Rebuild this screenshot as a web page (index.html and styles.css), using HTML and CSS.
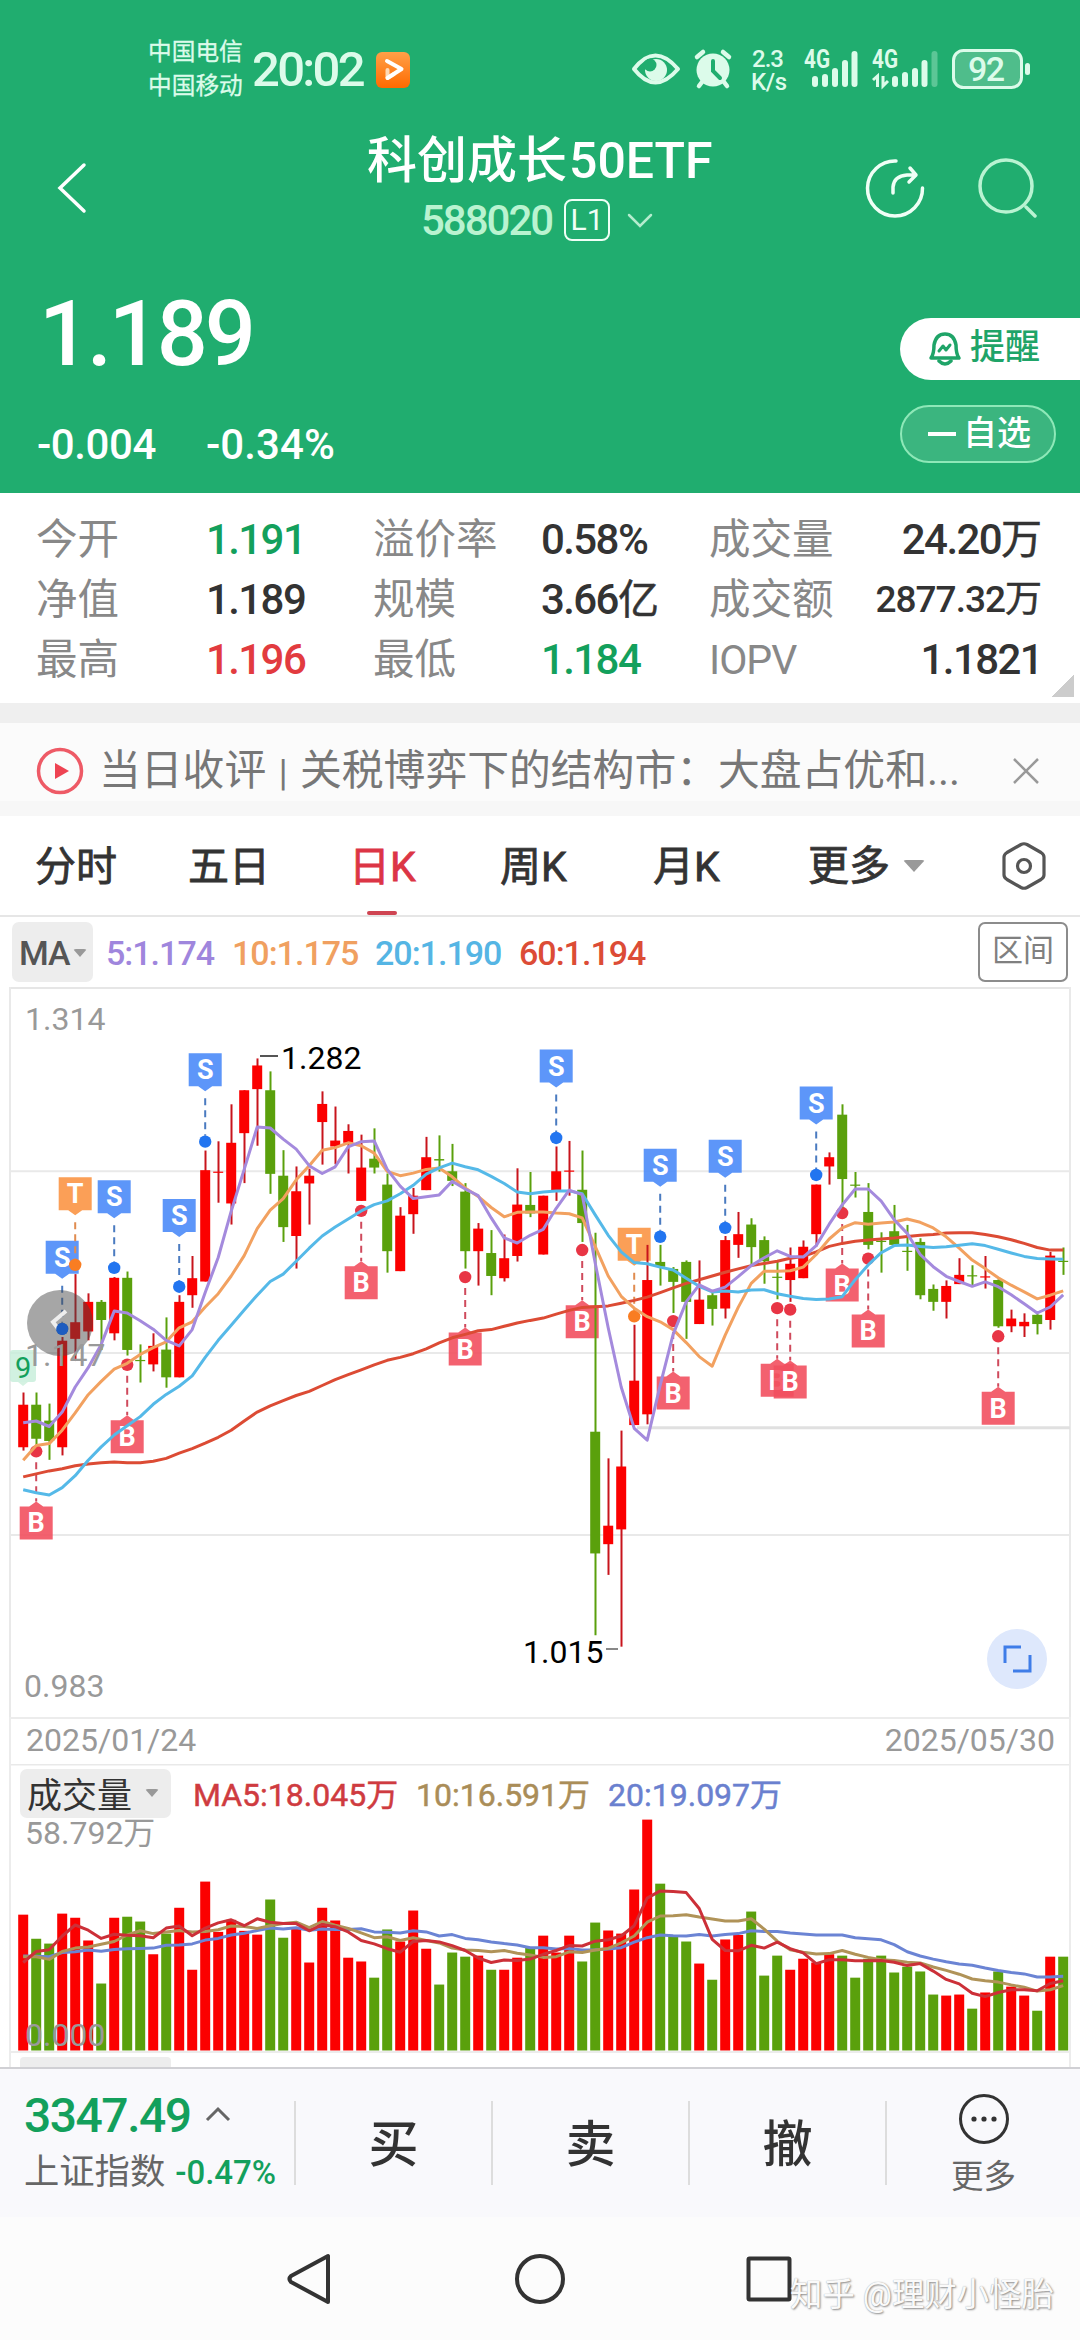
FILE: index.html
```html
<!DOCTYPE html>
<html lang="zh-CN">
<head>
<meta charset="utf-8">
<title>科创成长50ETF</title>
<link rel="stylesheet" href="styles.css">
</head>
<body>
<div class="app">
  <header class="hero">
    <div class="status">
      <div class="carriers"><span>中国电信</span><span>中国移动</span></div>
      <div class="clock">20:02</div>
      <svg class="appicon" width="36" height="36" viewBox="0 0 36 36">
        <defs><linearGradient id="og" x1="0" y1="0" x2="0" y2="1"><stop offset="0" stop-color="#ffa048"/><stop offset="1" stop-color="#ff6a00"/></linearGradient></defs>
        <rect x="1" width="34" height="36" rx="6" fill="url(#og)"/>
        <path d="M12.500 18V26L19 22" fill="none" stroke="#ffd9b5" stroke-width="4" stroke-linecap="round" stroke-linejoin="round"/>
        <path d="M12 9L26.500 17L12.500 26" fill="none" stroke="#fff" stroke-width="4" stroke-linecap="round" stroke-linejoin="round"/>
      </svg>
      <svg class="sysicons" width="412" height="50" viewBox="626 44 412 50" fill="#dcfbea">
        <path d="M634 69Q655 42 678 69Q655 96 634 69Z" fill="none" stroke="#dcfbea" stroke-width="4" stroke-linejoin="round"/>
        <circle cx="656" cy="70" r="11"/><circle cx="650" cy="65" r="6.500" fill="#20ad6f"/>
        <circle cx="713" cy="70" r="16.500"/>
        <path d="M697 57L703 52M729 57L723 52M702 82L699 86M724 82L727 86" stroke="#dcfbea" stroke-width="4.500" stroke-linecap="round"/>
        <path d="M713 61V71L720 78" fill="none" stroke="#20ad6f" stroke-width="4" stroke-linecap="round"/>
        <text x="752" y="67" class="s-net" textLength="32">2.3</text>
        <text x="751" y="90" class="s-net" textLength="36">K/s</text>
        <text x="804" y="68" class="s-g" textLength="26" lengthAdjust="spacingAndGlyphs">4G</text>
        <path d="M815 79V84M825 77V84M835 71V84M845 63V84M854.500 54V84" stroke="#dcfbea" stroke-width="6" stroke-linecap="round"/>
        <text x="872" y="68" class="s-g" textLength="26" lengthAdjust="spacingAndGlyphs">4G</text>
        <path d="M873 80L877.500 76V87M883 76V86L888 81" fill="none" stroke="#dcfbea" stroke-width="3"/>
        <path d="M895 79V84M905 75V84M915 71V84M924.500 63V84" stroke="#dcfbea" stroke-width="6" stroke-linecap="round"/>
        <path d="M934.500 54V84" stroke="#5cc696" stroke-width="6" stroke-linecap="round"/>
        <rect x="953.500" y="50.500" width="68" height="37" rx="10" fill="#4fbd8b" stroke="#dcfbea" stroke-width="3"/>
        <rect x="1025" y="63" width="5" height="12" rx="2.500"/>
        <text x="968" y="81" class="s-bat" textLength="37">92</text>
      </svg>
    </div>

    <div class="titlebar">
      <svg class="back" width="32" height="52" viewBox="0 0 32 52"><path d="M28 3L4 26L28 49" fill="none" stroke="#fff" stroke-width="3.500" stroke-linecap="round"/></svg>
      <div class="titles">
        <h1>科创成长<span>50ETF</span></h1>
        <div class="code"><span class="num">588020</span><span class="level">L1</span>
          <svg width="26" height="16" viewBox="0 0 26 16"><path d="M2 3L13 14L24 3" fill="none" stroke="#b4ecce" stroke-width="2.500" stroke-linecap="round"/></svg></div>
      </div>
      <div class="tools">
        <svg width="60" height="60" viewBox="0 0 60 60" fill="none" stroke="#effff6" stroke-width="3.500" stroke-linecap="round" stroke-linejoin="round"><path d="M31 3A27.500 27.500 0 1 0 57.500 30"/><path d="M28 35V29Q29 18 42 17H50M45 10L51 17L44 24"/></svg>
        <svg width="60" height="60" viewBox="0 0 60 60" fill="none" stroke="#b9f3d2" stroke-width="3.500" stroke-linecap="round"><circle cx="28" cy="28" r="26"/><path d="M48 49L57 58"/></svg>
      </div>
    </div>

    <div class="quote">
      <div class="price">1.189</div>
      <div class="change"><span class="diff">-0.004</span><span class="pct">-0.34%</span></div>
      <div class="remind">
        <svg width="34" height="36" viewBox="0 0 34 36" fill="none" stroke="#1fa468" stroke-width="3.500" stroke-linejoin="round" stroke-linecap="round"><path d="M3 27Q6 23 6 14Q8 3 17 3Q26 3 28 14Q28 23 31 27Z"/><path d="M11 20L15 15L18 19L22 14" stroke-width="3"/><path d="M11 30Q17 36 23 30"/></svg>
        <span>提醒</span></div>
      <div class="fav"><i></i><span>自选</span></div>
    </div>
  </header>

  <section class="stats">
    <span class="k">今开</span><span class="v down">1.191</span><span class="k">溢价率</span><span class="v">0.58%</span><span class="k">成交量</span><span class="v r">24.20<b>万</b></span>
    <span class="k">净值</span><span class="v">1.189</span><span class="k">规模</span><span class="v">3.66<b>亿</b></span><span class="k">成交额</span><span class="v r small">2877.32<b>万</b></span>
    <span class="k">最高</span><span class="v up">1.196</span><span class="k">最低</span><span class="v down">1.184</span><span class="k iopv">IOPV</span><span class="v r">1.1821</span>
    <i class="corner"></i>
  </section>

  <section class="news">
    <svg width="48" height="48" viewBox="0 0 48 48"><circle cx="24" cy="24" r="21.500" fill="none" stroke="#ee5a66" stroke-width="3.500"/><path d="M19 16L33 24L19 32Z" fill="#ee4352"/></svg>
    <span class="headline">当日收评<i>|</i>关税博弈下的结构市：大盘占优和...</span>
    <svg width="28" height="28" viewBox="0 0 28 28"><path d="M2 2L26 26M26 2L2 26" stroke="#999" stroke-width="2.500"/></svg>
  </section>

  <nav class="tabs">
    <span>分时</span><span>五日</span><span class="active">日K</span><span>周K</span><span>月K</span><span class="more">更多<i></i></span>
    <svg width="46" height="50" viewBox="0 0 46 50" fill="none" stroke="#555" stroke-width="3.200" stroke-linejoin="round"><path d="M20 3.500Q23 2 26 3.500L40 11.500Q43 13.500 43 16V34Q43 36.500 40 38.500L26 46.500Q23 48 20 46.500L6 38.500Q3 36.500 3 34V16Q3 13.500 6 11.500Z"/><circle cx="23" cy="25" r="6.500"/></svg>
  </nav>

  <section class="marow">
    <div class="chip">MA<i></i></div>
    <span class="m5">5:1.174</span><span class="m10">10:1.175</span><span class="m20">20:1.190</span><span class="m60">60:1.194</span>
    <div class="range">区间</div>
  </section>

  <svg id="kline" class="kline" width="1080" height="730" viewBox="0 987 1080 730"></svg>

  <section class="dates"><span>2025/01/24</span><span>2025/05/30</span></section>

  <section class="volume">
    <svg id="vol" class="volplot" width="1080" height="303" viewBox="0 1764 1080 303"></svg>
    <div class="vollegend">
      <div class="chip wide">成交量<i></i></div>
      <span class="v5">MA5:18.045万</span><span class="v10">10:16.591万</span><span class="v20">20:19.097万</span>
    </div>
    <div class="volmax">58.792万</div>
  </section>

  <footer class="dock">
    <div class="index">
      <div class="line1"><span>3347.49</span><svg width="26" height="16" viewBox="0 0 26 16"><path d="M2 14L13 3L24 14" fill="none" stroke="#666" stroke-width="3"/></svg></div>
      <div class="line2"><span>上证指数</span><b>-0.47%</b></div>
    </div>
    <div class="act"><span>买</span></div><div class="act"><span>卖</span></div><div class="act"><span>撤</span></div>
    <div class="act moreact">
      <svg width="52" height="52" viewBox="0 0 52 52"><circle cx="26" cy="26" r="23.500" fill="none" stroke="#333" stroke-width="3"/><g fill="#333"><circle cx="16" cy="26" r="2.600"/><circle cx="26" cy="26" r="2.600"/><circle cx="36" cy="26" r="2.600"/></g></svg>
      <span>更多</span></div>
  </footer>

  <div class="sysnav">
    <svg width="1080" height="123" viewBox="0 2217 1080 123" fill="none" stroke="#333" stroke-width="4" stroke-linejoin="round"><path d="M328 2256V2302L291 2282Q288 2279 291 2276Z"/><circle cx="540" cy="2279" r="23"/><rect x="748.500" y="2258.500" width="41" height="41" rx="1"/></svg>
    <div class="mark">知乎 @理财小怪胎</div>
  </div>
</div>
<script src="chart.js"></script>
</body>
</html>
```

FILE: styles.css
```css
* { box-sizing: border-box; }
body { margin: 0; background: #fff; font-family: Roboto, "Noto Sans CJK SC", sans-serif; color: #333; }
i, b { font-style: normal; font-weight: inherit; }
.app { width: 1080px; height: 2340px; overflow: hidden; display: flex; flex-direction: column; }
.app > * { flex: none; }

.hero { height: 493px; background: #20ad6f; color: #fff; }
.status { height: 125px; padding: 34px 42px 0 148px; display: flex; align-items: flex-start; color: #dcfbea; }
.carriers { display: flex; flex-direction: column; font-size: 23.7px; line-height: 34px; width: 104px; white-space: nowrap; padding-top: 1px; -webkit-text-stroke: 0.3px; }
.clock { font-size: 49px; font-weight: 500; line-height: 72px; letter-spacing: -2.7px; width: 123px; }
.appicon { margin-top: 18px; }
.sysicons { margin: 10px 0 0 auto; }
.s-net { font-size: 24px; font-weight: 500; }
.s-g { font-size: 25px; font-weight: 700; }
.s-bat { font-size: 34px; font-weight: 500; }

.titlebar { height: 145px; display: flex; padding: 0 42px 0 56px; }
.back { margin-top: 37px; }
.titles { flex: 1; padding-left: 279px; }
h1 { margin: 0; font-size: 50px; font-weight: 500; line-height: 72px; height: 72px; white-space: nowrap; }
h1 span { margin-left: 2px; }
.code { display: flex; align-items: center; height: 46px; margin-left: 54px; color: #b9f3d0; }
.code .num { font-size: 42px; font-weight: 500; letter-spacing: -2px; width: 143px; }
.level { width: 46px; height: 42px; border: 2.5px solid #effff6; border-radius: 8px; color: #effff6; font-size: 30px; line-height: 37px; text-align: center; margin-right: 17px; }
.tools { display: flex; gap: 53px; padding-top: 33px; }

.quote { height: 223px; position: relative; padding-left: 37px; }
.price { font-size: 90px; font-weight: 500; line-height: 100px; padding-top: 15px; letter-spacing: -3.2px; margin-left: 2px; }
.change { display: flex; font-size: 42px; font-weight: 500; line-height: 50px; margin-top: 35px; }
.diff { width: 169px; letter-spacing: -0.4px; }
.pct { letter-spacing: 0.1px; }
.remind { position: absolute; right: 0; top: 48px; width: 180px; height: 62px; border-radius: 31px 0 0 31px; background: #fff; color: #1fa468; font-size: 35px; font-weight: 500; line-height: 54px; display: flex; align-items: center; padding-left: 28px; gap: 8px; }
.fav { position: absolute; right: 24px; top: 135px; width: 156px; height: 58px; border-radius: 29px; border: 2px solid #8ee8b8; background: #3bb57f; font-size: 34px; font-weight: 500; line-height: 50px; display: flex; align-items: center; padding-left: 26px; gap: 7px; }
.remind span, .fav span { padding-bottom: 3px; }
.fav i { width: 28px; height: 4px; background: #fff; }

.stats { height: 210px; padding: 17px 38px 13px 36px; display: grid; grid-template-columns: 170px 167px 168px 168px 130px 1fr; grid-auto-rows: 60px; line-height: 60px; position: relative; }
.k { color: #888; font-size: 41.5px; white-space: nowrap; }
.iopv { font-size: 41px; letter-spacing: -1px; }
.v { font-size: 42px; font-weight: 500; letter-spacing: -1.6px; white-space: nowrap; }
.v b { letter-spacing: 0; font-size: 41px; font-weight: 400; -webkit-text-stroke: 0.5px; }
.r { text-align: right; }
.small { font-size: 37px; letter-spacing: -1px; }
.small b { font-size: 37px; }
.up { color: #e23b3f; }
.down { color: #13a05c; }
.corner { position: absolute; right: 6px; top: 181px; width: 23px; height: 23px; background: linear-gradient(135deg, transparent 50%, #ccc 50%); }

.news { height: 113px; border-top: 20px solid #efefef; border-bottom: 15px solid #f7f7f7; background: #fbfbfb; display: flex; align-items: center; padding: 18px 40px 0 36px; }
.headline { font-size: 41.8px; color: #777; margin-left: 15px; width: 913px; white-space: nowrap; line-height: 60px; padding-top: 2px; }
.headline i { margin: 0 12.5px; font-size: 36px; }

.tabs { height: 101px; border-bottom: 2px solid #e6e6e6; display: flex; align-items: center; padding-left: 35px; font-size: 41px; white-space: nowrap; -webkit-text-stroke: 0.8px; }
.tabs span { height: 99px; line-height: 102px; width: 153px; }
.tabs .active { color: #dc3545; position: relative; width: 151px; margin-left: 8px; }
.tabs .active::after { content: ""; position: absolute; left: 18px; bottom: 0; width: 30px; height: 4px; border-radius: 2px; background: #cf4452; }
.tabs .more { width: 193px; display: flex; align-items: center; gap: 13px; margin-left: 2px; }
.tabs i, .chip i { border: 11px solid transparent; border-top: 12px solid #999; border-bottom: 0; border-radius: 3px; }

.marow { height: 70px; display: flex; align-items: center; padding: 0 12px; font-size: 34px; font-weight: 500; letter-spacing: -1px; }
.marow span { white-space: nowrap; padding-top: 2px; }
.chip { width: 81px; height: 60px; background: #ededed; border-radius: 7px; display: flex; align-items: center; padding-left: 7px; gap: 3px; color: #555; font-size: 34px; padding-top: 1px; }
.chip i { border-width: 8px 7px 0; }
.m5 { color: #9f86dd; margin-left: 13px; width: 126px; }
.m10 { color: #f0a060; width: 143px; }
.m20 { color: #55b5e4; width: 144px; }
.m60 { color: #dc4c36; }
.range { margin-left: auto; width: 90px; height: 60px; border: 2.5px solid #8c8c8c; border-radius: 7px; color: #808080; font-size: 31px; font-weight: 400; line-height: 54px; text-align: center; letter-spacing: 0; }

.kline, .volplot { display: block; }
.axis { font-size: 32px; fill: #999; }
.peak { font-size: 32px; fill: #000; }
.tag { font-size: 27px; font-weight: 700; fill: #fff; text-anchor: middle; }

.dates { height: 47px; margin: 0 9px; border: 2px solid #ececec; border-width: 2px 2px 0; display: flex; justify-content: space-between; align-items: center; padding: 0 14px 4px 15px; font-size: 32px; color: #999; }

.volume { height: 303px; position: relative; }
.volplot { position: absolute; inset: 0; }
.vollegend { position: relative; display: flex; align-items: center; height: 49px; margin: 5px 0 0 20px; font-size: 32px; white-space: nowrap; -webkit-text-stroke: 0.5px; }
.vollegend span { padding-bottom: 4px; }
.chip.wide { width: 151px; height: 49px; color: #333; font-size: 35px; gap: 13px; padding: 0 0 2px 7px; margin-right: 22px; -webkit-text-stroke: 0; }
.v5 { color: #cf3b40; width: 223px; }
.v10 { color: #aa8d58; width: 192px; }
.v20 { color: #6a80cf; }
.volmax { position: relative; margin: -3px 0 0 25px; font-size: 32px; line-height: 36px; color: #999; }

.dock { height: 150px; border-top: 2px solid #d0d0d4; background: #f9f9fc; display: flex; align-items: flex-start; padding-top: 32px; }
.index { width: 294px; padding-left: 24px; margin-top: -16px; }
.line1 { display: flex; align-items: center; gap: 14px; font-size: 48px; font-weight: 500; letter-spacing: -1.5px; line-height: 62px; color: #13a05c; }
.line1 svg { margin-bottom: 4px; }
.line2 { display: flex; align-items: center; gap: 10px; font-size: 35.3px; line-height: 48px; color: #666; white-space: nowrap; }
.line2 b { font-size: 33px; font-weight: 500; letter-spacing: 0; color: #13a05c; padding-top: 2px; }
.act { width: 197px; height: 84px; border-left: 2px solid #ddd; font-size: 50px; font-weight: 500; line-height: 88px; text-align: center; }
.moreact { width: 195px; display: flex; flex-direction: column; align-items: center; font-size: 32.5px; font-weight: 400; line-height: 48px; color: #666; }
.moreact svg { margin-top: -8px; flex: none; }
.moreact span { margin-top: 8px; }

.sysnav { height: 123px; background: #fcfcfc; position: relative; }
.sysnav svg { display: block; }
.mark { position: absolute; left: 790px; top: 55px; font-size: 32.4px; line-height: 46px; white-space: nowrap; color: #fafafa; text-shadow: 1px 1px 2px #8a8a8a, 0 0 1px #aaa; }
```

FILE: chart.js
```js
const X = i => 23.2 + 13 * i;
const Y = v => 980 + v / 2.703;
const V = v => 1540 + v / 2.904;
const RED = '#fb0000', GREEN = '#5aa00c';

// colour, high, body top, body bottom, low
const candles = `r1115,1148,1263,1272 g1115,1148,1240,1258 g1145,1191,1246,1297 r965,975,1263,1285 r795,925,970,1030
r847,870,950,974 g865,870,919,1000 r803,805,955,974 g788,805,1000,1015 g985,1027,1029,1088 r955,989,1039,1058
g912,999,1074,1102 r852,870,1074,1074 r746,806,852,886 r461,514,815,815 r436,518,520,602 r336,440,604,661
r298,298,414,549 r212,231,295,448 g247,298,524,578 g460,529,668,708 r504,571,692,780 r510,529,550,661
r301,335,384,499 r342,434,450,498 r390,408,440,523 r418,507,597,597 g401,483,507,523 g523,553,733,791
r614,637,787,787 r562,583,633,686 r424,479,568,568 g420,484,488,518 g443,517,543,557 g549,572,733,780
r657,672,733,826 g676,738,800,852 r688,752,806,815 r509,607,746,761 g519,608,631,641 r583,583,742,742
r450,517,568,597 r435,515,518,583 g461,567,657,708 g683,1221,1550,1771 r1293,1475,1525,1608 r1218,1315,1485,1802
r932,1083,1203,1203 r716,811,1174,1201 g716,762,775,826 g776,781,816,900 g758,762,870,970 r758,864,930,930
g846,852,889,934 r692,703,888,915 r627,687,716,751 g644,661,722,770 g693,703,760,821 g757,802,804,863
r723,767,811,870 r704,721,806,806 r553,553,687,720 r466,479,504,553 g336,364,538,615 g519,553,555,588
g549,627,716,728 g682,705,707,791 g608,679,716,716 g662,732,734,786 g698,708,852,863 g823,835,870,894
r812,827,870,915 r752,797,822,822 g771,798,801,830 r746,801,804,834 g809,811,936,940 r891,915,936,952
r901,924,936,965 g903,905,930,958 r735,745,919,945 g723,759,762,797`.split(/\s+/)
  .map(s => [s[0] === 'r' ? RED : GREEN, ...s.slice(1).split(',').map(Number)]);

const ma = {
  '#dc4b34': [1343,1335,1327,1321,1313,1308,1305,1303,1305,1305,1301,1293,1279,1267,1252,1236,1217,1192,1168,1151,1137,1123,1112,1096,1080,1067,1054,1040,1028,1020,1010,997,981,967,958,948,945,936,927,920,914,903,893,885,883,881,874,866,857,845,832,820,810,800,790,781,772,766,760,752,747,735,720,712,706,703,700,697,693,690,688,684,683,683,688,694,702,712,723,730,730],
  '#f2a160': [1298,1258,1253,1217,1170,1121,1085,1052,1036,1012,994,978,940,924,884,848,800,745,672,622,591,540,502,460,453,440,448,468,517,529,522,512,508,532,562,585,615,640,628,627,627,630,632,643,720,800,855,887,910,924,945,980,1018,1044,960,885,820,787,787,786,776,742,700,670,656,660,657,654,646,655,670,694,725,757,780,805,825,843,862,852,840],
  '#55b9e8': [1378,1386,1392,1372,1340,1298,1262,1230,1205,1180,1147,1120,1098,1070,1020,974,933,892,852,815,795,760,725,692,668,646,624,607,597,578,555,525,508,495,505,513,531,550,573,578,573,570,570,578,635,690,735,764,767,776,784,806,828,843,841,843,838,837,848,855,861,864,862,856,810,770,737,718,716,720,723,721,717,713,718,728,738,747,753,754,755],
  '#a48add': [1197,1192,1207,1168,1100,1048,985,895,900,921,944,974,989,945,845,750,625,512,397,400,430,457,502,523,505,451,437,435,512,557,591,586,581,544,565,583,643,697,711,690,674,617,568,580,765,940,1100,1212,1244,1095,957,870,824,841,830,802,772,751,732,747,749,718,660,608,565,565,598,648,685,742,775,801,815,828,816,829,851,875,900,884,851]
};

const volumes = [1088,1158,1172,1085,1097,1163,1288,1097,1094,1108,1203,1143,1068,1248,992,1138,1103,1135,1146,1044,1155,1128,1227,1068,1105,1213,1224,1271,1131,1166,1076,1187,1291,1198,1210,1207,1248,1248,1213,1184,1149,1198,1149,1224,1111,1134,1143,1015,812,998,1152,1166,1230,1277,1160,1147,1079,1265,1207,1248,1216,1227,1203,1207,1271,1216,1207,1256,1239,1253,1320,1323,1320,1361,1314,1253,1297,1323,1367,1210,1210];

const vma = {
  '#6b84d4': [1208,1209,1210,1198,1196,1191,1194,1189,1187,1186,1185,1177,1176,1173,1162,1157,1147,1142,1134,1127,1130,1126,1133,1130,1131,1131,1129,1138,1139,1141,1135,1138,1150,1146,1157,1161,1167,1172,1176,1184,1184,1188,1186,1191,1190,1188,1184,1168,1155,1147,1149,1150,1146,1150,1146,1143,1135,1137,1137,1141,1144,1147,1147,1147,1155,1158,1161,1175,1196,1208,1217,1225,1231,1235,1243,1250,1256,1260,1269,1269,1267],
  '#b09358': [1210,1210,1218,1195,1185,1182,1174,1166,1147,1135,1143,1138,1134,1138,1137,1132,1121,1122,1128,1120,1114,1110,1126,1108,1119,1128,1141,1155,1152,1163,1155,1163,1170,1185,1191,1192,1196,1192,1200,1205,1212,1210,1196,1198,1191,1186,1170,1150,1110,1092,1091,1088,1095,1101,1106,1106,1100,1130,1165,1190,1197,1202,1201,1192,1203,1212,1219,1221,1226,1228,1240,1250,1261,1275,1280,1284,1292,1299,1310,1306,1294],
  '#cc3038': [1227,1195,1190,1150,1118,1133,1157,1145,1148,1149,1155,1127,1121,1149,1127,1112,1103,1120,1100,1110,1114,1114,1135,1117,1123,1138,1163,1173,1187,1197,1166,1163,1167,1178,1192,1214,1227,1220,1221,1217,1203,1192,1178,1179,1165,1161,1150,1120,1040,1019,1021,1024,1070,1160,1192,1193,1177,1185,1168,1187,1199,1230,1219,1219,1222,1222,1221,1226,1236,1230,1252,1276,1289,1316,1326,1314,1306,1306,1309,1288,1280]
};

// letter, candle index, dot, label top
const marks = [['S',3,943,705],['T',4,770,533],['S',7,778,541],['S',12,829,592],['S',14,437,198],['S',41,427,188],['S',49,694,456],['S',54,670,432],['S',61,527,288],['T',47,909,670],
  ['B',1,1274,1423],['B',8,1040,1190],['B',26,624,774],['B',34,803,953],['B',43,730,879],['B',50,922,1072],['B',58,887,1037],['B',59,891,1042],['B',63,630,780],['B',65,753,904],['B',75,963,1113]];
const box = { S: '#4b8bf8', T: '#fb9545', B: '#f2505f' }, dot = { S: '#2275f0', T: '#f97d22', B: '#e83545' }, dash = { S: '#4a7bc0', T: '#e08c50', B: '#cf4a5c' };

const line = (x1, y1, x2, y2, c, w = 2, extra = '') => `<line x1="${x1}" y1="${y1}" x2="${x2}" y2="${y2}" stroke="${c}" stroke-width="${w}" ${extra}/>`;
const curve = (a, c, f) => `<polyline fill="none" stroke="${c}" stroke-width="3" stroke-linejoin="round" points="${a.map((v, i) => X(i).toFixed(1) + ',' + f(v).toFixed(1)).join(' ')}"/>`;

let k = '';
[517, 1008, 1500].forEach(v => k += line(10, Y(v), 1070, Y(v), '#e9e9e9'));
k += line(10, 988, 1070, 988, '#e6e6e6') + line(10, 987, 10, 1717, '#e9e9e9') + line(1070, 987, 1070, 1717, '#e9e9e9');
k += line(637, Y(1210), 1070, Y(1210), '#e0e0e0', 3);
for (const [t, i, d, top] of marks) {
  const x = X(i), dy = Y(d), ty = Y(top), b = t === 'B';
  k += line(x, b ? dy + 11 : ty + 45, x, b ? ty - 5 : dy - 6, dash[t], 2, 'stroke-dasharray="7 5"');
  const tip = b ? `M${x - 7} ${ty}l7 -5l7 5z` : `M${x - 7} ${ty + 33}l7 5l7 -5z`;
  k += `<path fill="${box[t]}" fill-opacity=".9" d="M${x - 16.5} ${ty}h33v33h-33z${tip}"/>`;
  k += `<text class="tag" x="${x}" y="${ty + 26}">${t}</text>`;
  k += `<circle cx="${x}" cy="${dy}" r="6.200" fill="${dot[t]}"/>`;
}
candles.forEach(([c, h, a, b, l], i) => {
  k += line(X(i) + .3, Y(h), X(i) + .3, Y(l), c === RED ? '#c8141c' : c);
  k += `<rect x="${X(i) - 5}" y="${Y(a)}" width="10" height="${Math.max(1.2, (b - a) / 2.703)}" fill="${c}"/>`;
});
for (const c in ma) k += curve(ma[c], c, Y);
k += `<rect x="10" y="1350" width="26" height="32" rx="3" fill="#c6edd9" opacity=".8"/><path d="M18 1382l5 4l5 -4z" fill="#d5f2e2"/><text x="15" y="1378" font-size="29" fill="#13a05c">9</text>`;
k += '<circle cx="60" cy="1323" r="33" fill="#444" opacity=".48"/><path d="M66 1311L53 1322L60 1331" fill="none" stroke="#eee" stroke-width="4"/><circle cx="62.200" cy="1329" r="6" fill="#1d5cc0"/>';
k += '<text class="axis" x="25" y="1030">1.314</text><text class="axis" x="25" y="1366">1.147</text><text class="axis" x="24" y="1697">0.983</text>';
k += line(260, 1056, 278, 1056, '#555') + '<text class="peak" x="281" y="1069">1.282</text>';
k += line(606, 1649, 618, 1649, '#888') + '<text class="peak" x="523" y="1663">1.015</text>';
k += '<circle cx="1017" cy="1659" r="30" fill="#dee8fc"/><path d="M1021 1647h-16v16M1013 1671h17v-16" fill="none" stroke="#3f7de8" stroke-width="3"/>';
document.getElementById('kline').innerHTML = k;

let s = line(10, 1764, 1070, 1764, '#e9e9e9', 3) + line(10, 1764, 10, 2067, '#ececec') + line(1070, 1764, 1070, 2067, '#ececec') + line(10, 2052, 1070, 2052, '#ececec');
volumes.forEach((v, i) => s += `<rect x="${X(i) - 5}" y="${V(v)}" width="10" height="${2050.5 - V(v)}" fill="${candles[i][0]}"/>`);
for (const c in vma) s += curve(vma[c], c, V);
s += '<text class="axis" x="25" y="2046">0.000</text><path d="M20 2067v-6q0 -4 4 -4h143q4 0 4 4v6z" fill="#ededed"/>';
document.getElementById('vol').innerHTML = s;
```
